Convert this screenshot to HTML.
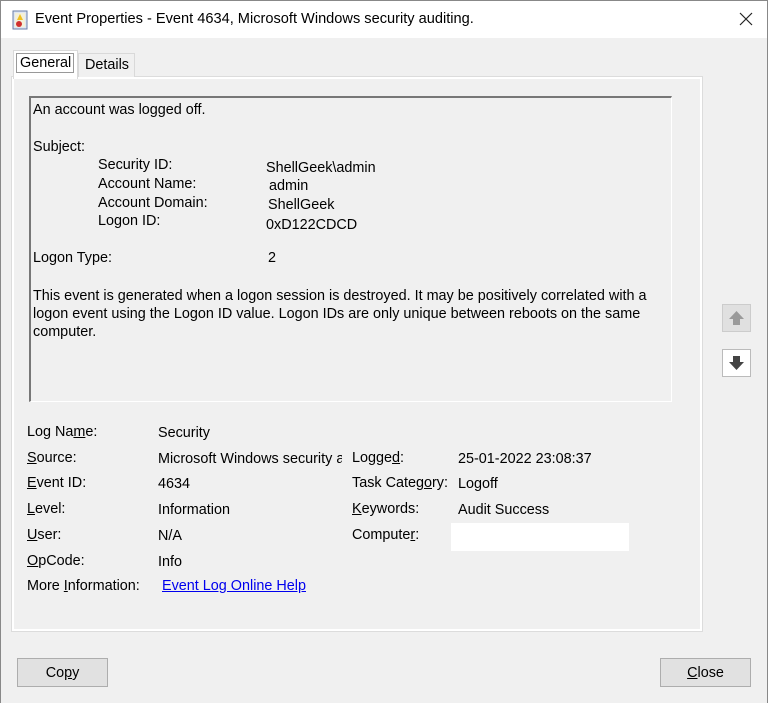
<!DOCTYPE html>
<html><head><style>
*{margin:0;padding:0;box-sizing:border-box}
body{width:768px;height:703px;background:#f0f0f0;font-family:"Liberation Sans",sans-serif;font-size:14.4px;color:#000;position:relative;overflow:hidden}
.a{position:absolute;white-space:nowrap;line-height:16px}
u{text-decoration:underline}
</style></head><body>
<div style="position:absolute;left:0;top:0;width:768px;height:703px;border:1px solid #888;border-bottom:none"></div>
<div style="position:absolute;left:1px;top:1px;width:766px;height:37px;background:#fff"></div>
<svg style="position:absolute;left:12px;top:10px" width="16" height="20"><rect x="1" y="1" width="14" height="18" fill="#dfe6f2" stroke="#6a7ea8"/><rect x="3" y="3" width="10" height="14" fill="#f4f0d8"/><path d="M8 4 L11 10 L5 10Z" fill="#f0c020"/><circle cx="7" cy="14" r="3" fill="#d03030"/></svg>
<div class="a" style="left:35px;top:11px;font-size:14.6px">Event Properties - Event 4634, Microsoft Windows security auditing.</div>
<svg style="position:absolute;left:739px;top:12px" width="14" height="14"><path d="M1 1L13 13M13 1L1 13" stroke="#222" stroke-width="1.2"/></svg>

<div style="position:absolute;left:11px;top:76px;width:692px;height:556px;border:1px solid #dcdcdc;background:#fff"></div>
<div style="position:absolute;left:14px;top:79px;width:686px;height:550px;background:#f0f0f0"></div>
<div style="position:absolute;left:78px;top:53px;width:57px;height:24px;border:1px solid #d9d9d9;border-bottom:none;background:#f0f0f0"></div>
<div class="a" style="left:85px;top:57px">Details</div>
<div style="position:absolute;left:13px;top:50px;width:65px;height:29px;border:1px solid #d9d9d9;border-bottom:none;background:#fff"></div>
<div style="position:absolute;left:16px;top:53px;width:58px;height:20px;border:1px solid #999"></div>
<div class="a" style="left:20px;top:55px">General</div>

<div style="position:absolute;left:29px;top:96px;width:643px;height:306px;border-top:2px solid #777;border-left:2px solid #777;border-right:1px solid #fff;border-bottom:1px solid #fff;background:#f0f0f0"></div>
<div class="a" style="left:33px;top:102px">An account was logged off.</div>
<div class="a" style="left:33px;top:139px">Subject:</div>
<div class="a" style="left:98px;top:157px">Security ID:</div><div class="a" style="left:266px;top:160px">ShellGeek\admin</div>
<div class="a" style="left:98px;top:176px">Account Name:</div><div class="a" style="left:269px;top:178px">admin</div>
<div class="a" style="left:98px;top:195px">Account Domain:</div><div class="a" style="left:268px;top:197px">ShellGeek</div>
<div class="a" style="left:98px;top:213px">Logon ID:</div><div class="a" style="left:266px;top:217px">0xD122CDCD</div>
<div class="a" style="left:33px;top:250px">Logon Type:</div><div class="a" style="left:268px;top:250px">2</div>
<div class="a" style="left:33px;top:288px">This event is generated when a logon session is destroyed. It may be positively correlated with a</div>
<div class="a" style="left:33px;top:306px">logon event using the Logon ID value. Logon IDs are only unique between reboots on the same</div>
<div class="a" style="left:33px;top:324px">computer.</div>

<div style="position:absolute;left:722px;top:304px;width:29px;height:28px;border:1px solid #ccc;background:#e0e0e0"></div>
<svg style="position:absolute;left:727px;top:309px" width="19" height="18"><path d="M9.5 2L17 10H13V16H6V10H2Z" fill="#9a9a9a"/></svg>
<div style="position:absolute;left:722px;top:349px;width:29px;height:28px;border:1px solid #bbb;background:#fff"></div>
<svg style="position:absolute;left:727px;top:354px" width="19" height="18"><path d="M6 2H13V8H17L9.5 16L2 8H6Z" fill="#444"/></svg>

<div class="a" style="left:27px;top:424px">Log Na<u>m</u>e:</div><div class="a" style="left:158px;top:425px">Security</div>
<div class="a" style="left:27px;top:450px"><u>S</u>ource:</div><div class="a" style="left:158px;top:451px;width:184px;overflow:hidden">Microsoft Windows security auditing.</div>
<div class="a" style="left:352px;top:450px">Logge<u>d</u>:</div><div class="a" style="left:458px;top:451px">25-01-2022 23:08:37</div>
<div class="a" style="left:27px;top:475px"><u>E</u>vent ID:</div><div class="a" style="left:158px;top:476px">4634</div>
<div class="a" style="left:352px;top:475px">Task Categ<u>o</u>ry:</div><div class="a" style="left:458px;top:476px">Logoff</div>
<div class="a" style="left:27px;top:501px"><u>L</u>evel:</div><div class="a" style="left:158px;top:502px">Information</div>
<div class="a" style="left:352px;top:501px"><u>K</u>eywords:</div><div class="a" style="left:458px;top:502px">Audit Success</div>
<div class="a" style="left:27px;top:527px"><u>U</u>ser:</div><div class="a" style="left:158px;top:528px">N/A</div>
<div class="a" style="left:352px;top:527px">Compute<u>r</u>:</div>
<div style="position:absolute;left:451px;top:523px;width:178px;height:28px;background:#fff"></div>
<div class="a" style="left:27px;top:553px"><u>O</u>pCode:</div><div class="a" style="left:158px;top:554px">Info</div>
<div class="a" style="left:27px;top:578px">More <u>I</u>nformation:</div><div class="a" style="left:162px;top:578px;color:#0000ee;text-decoration:underline">Event Log Online Help</div>

<div style="position:absolute;left:17px;top:658px;width:91px;height:29px;border:1px solid #adadad;background:#e1e1e1"></div>
<div class="a" style="left:17px;top:665px;width:91px;text-align:center">Co<u>p</u>y</div>
<div style="position:absolute;left:660px;top:658px;width:91px;height:29px;border:1px solid #adadad;background:#e1e1e1"></div>
<div class="a" style="left:660px;top:665px;width:91px;text-align:center"><u>C</u>lose</div>
</body></html>
